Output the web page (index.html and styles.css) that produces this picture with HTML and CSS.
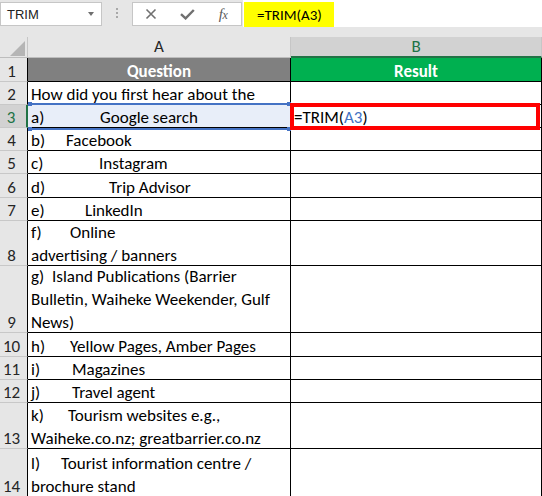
FILE: index.html
```html
<!DOCTYPE html>
<html lang="en">
<head>
<meta charset="utf-8">
<title>TRIM</title>
<link rel="stylesheet" href="styles.css">
</head>
<body>
<div class="toolbar">
  <div class="namebox"><span class="name">TRIM</span><span class="caret"></span></div>
  <div class="grip"><i></i><i></i><i></i></div>
  <div class="fbtns">
    <div class="btn">
      <svg width="12" height="12" viewBox="0 0 12 12"><path d="M1.5 1.5 L10.5 10.5 M10.5 1.5 L1.5 10.5" stroke="#707070" stroke-width="1.6" fill="none"/></svg>
    </div>
    <div class="btn">
      <svg width="15" height="11" viewBox="0 0 15 11"><path d="M1 5.2 L5.6 9.4 L13.8 1" stroke="#707070" stroke-width="2.4" fill="none"/></svg>
    </div>
    <div class="btn"><span class="fx">f<span class="fxx">x</span></span></div>
  </div>
  <div class="fbar"><span class="fhl">=TRIM(A3)</span></div>
</div>

<div class="sheet">
  <div class="corner"><svg width="28" height="20" viewBox="0 0 28 20"><polygon points="25,4 25,19 10,19" fill="#b5b5b5"/></svg></div>
  <div class="ch">A</div>
  <div class="ch on">B</div>

  <div class="rh">1</div>
  <div class="c hq">Question</div>
  <div class="c hr">Result</div>

  <div class="rh">2</div>
  <div class="c"><div class="t">How did you first hear about the</div></div>
  <div class="c b"></div>

  <div class="rh on">3</div>
  <div class="c ref"><div class="t"><span class="lab w69">a)</span>Google search</div></div>
  <div class="c b"><div class="t">=TRIM(<span class="arg">A3</span>)</div></div>

  <div class="rh">4</div>
  <div class="c"><div class="t"><span class="lab w35">b)</span>Facebook</div></div>
  <div class="c b"></div>

  <div class="rh">5</div>
  <div class="c"><div class="t"><span class="lab w68">c)</span>Instagram</div></div>
  <div class="c b"></div>

  <div class="rh">6</div>
  <div class="c"><div class="t"><span class="lab w78">d)</span>Trip Advisor</div></div>
  <div class="c b"></div>

  <div class="rh">7</div>
  <div class="c"><div class="t"><span class="lab w54">e)</span>LinkedIn</div></div>
  <div class="c b"></div>

  <div class="rh">8</div>
  <div class="c"><div class="t"><span class="lab w39">f)</span>Online<br>advertising / banners</div></div>
  <div class="c b"></div>

  <div class="rh">9</div>
  <div class="c"><div class="t"><span class="lab w21">g)</span>Island Publications (Barrier<br>Bulletin, Waiheke Weekender, Gulf<br>News)</div></div>
  <div class="c b"></div>

  <div class="rh">10</div>
  <div class="c"><div class="t"><span class="lab w39">h)</span>Yellow Pages, Amber Pages</div></div>
  <div class="c b"></div>

  <div class="rh">11</div>
  <div class="c"><div class="t"><span class="lab w41">i)</span>Magazines</div></div>
  <div class="c b"></div>

  <div class="rh">12</div>
  <div class="c"><div class="t"><span class="lab w41">j)</span>Travel agent</div></div>
  <div class="c b"></div>

  <div class="rh">13</div>
  <div class="c"><div class="t"><span class="lab w37">k)</span>Tourism websites e.g.,<br>Waiheke.co.nz; greatbarrier.co.nz</div></div>
  <div class="c b"></div>

  <div class="rh">14</div>
  <div class="c"><div class="t"><span class="lab w30">l)</span>Tourist information centre /<br>brochure stand</div></div>
  <div class="c b"></div>

  <div class="sel"><i class="k tl"></i><i class="k tr"></i><i class="k bl"></i><i class="k br"></i></div>
  <div class="redbox"></div>
</div>
</body>
</html>
```

FILE: styles.css
```css
* { box-sizing: border-box; margin: 0; padding: 0; }
html, body { width: 542px; height: 496px; overflow: hidden; }
body {
  background: #e6e6e6;
  font-family: Carlito, Lato, "Liberation Sans", sans-serif;
  color: #000;
}

/* ---------- toolbar ---------- */
.toolbar { display: flex; align-items: flex-start; height: 37px; }
.namebox {
  margin-top: 2px; width: 102px; height: 24px;
  background: #fff; border: 1px solid #c6c6c6;
  display: flex; align-items: center; justify-content: space-between;
  padding: 0 7px 0 6px;
}
.name { font-family: "Liberation Sans", sans-serif; font-size: 13px; color: #222; }
.caret {
  width: 0; height: 0;
  border-left: 3.5px solid transparent; border-right: 3.5px solid transparent;
  border-top: 4px solid #6f6f6f;
}
.grip { width: 30px; display: flex; flex-direction: column; align-items: center; gap: 2px; padding-top: 8px; }
.grip i { display: block; width: 2px; height: 2px; background: #a8a8a8; }
.fbtns {
  margin-top: 2px; width: 110px; height: 24px;
  background: #fff; border: 1px solid #c6c6c6;
  display: flex;
}
.btn { width: 36px; height: 22px; display: flex; align-items: center; justify-content: center; }
.fx { font-family: "Liberation Serif", serif; font-style: italic; font-size: 15px; color: #5a5a5a; letter-spacing: -0.5px; }
.fxx { font-size: 12px; }
.fbar { flex: 1; height: 27px; margin-left: 1px; background: #fff; }
.fhl {
  display: block; margin: 2px 0 0 1px; width: 90px; height: 25px;
  background: #ffff00; padding-left: 13px;
  font-size: 15px; line-height: 26px; color: #000;
}

/* ---------- sheet ---------- */
.sheet {
  position: relative;
  display: grid;
  grid-template-columns: 28px 263px 251px;
  grid-template-rows: 21px 24px 23px 23px 23px 23px 24px 23px 45px 67px 24px 23px 23px 46px 48px;
  font-size: 17px;
}
.corner { border-right: 1px solid #c6c6c6; border-bottom: 1px solid #bdbdbd; background: #e6e6e6; }
.corner svg { display: block; }
.ch {
  background: #e6e6e6; border-right: 1px solid #c6c6c6; border-bottom: 1px solid #bdbdbd;
  display: flex; align-items: flex-end; justify-content: center;
  line-height: 20px; color: #262626;
}
.ch.on { background: #d2d2d2; color: #217346; border-bottom: 2px solid #217346; line-height: 19px; }

.rh {
  background: #e6e6e6; border-right: 1px solid #000; border-bottom: 1px solid #c8c8c8;
  display: flex; align-items: flex-end; justify-content: center;
  padding-right: 4px; line-height: 19px; color: #262626;
}
.rh.on { background: #d2d2d2; color: #217346; border-right: 2px solid #217346; }

.c {
  background: #fff; border-right: 1px solid #000; border-bottom: 1px solid #000;
  display: flex; align-items: flex-end;
  padding-left: 3px; line-height: 23px; white-space: nowrap;
}
.t { white-space: nowrap; position: relative; top: 2px; }
.hq, .hr { justify-content: center; padding-left: 0; color: #fff; font-weight: bold; line-height: 19px; }
.hq { background: #808080; }
.hr { background: #00b050; }
.ref { background: #e8eef9; }
.arg { color: #4472c4; }

.lab { display: inline-block; }
.w21 { width: 21px; } .w30 { width: 30px; } .w35 { width: 35px; } .w37 { width: 37px; }
.w39 { width: 39px; } .w41 { width: 41px; } .w54 { width: 54px; } .w68 { width: 68px; }
.w69 { width: 69px; } .w78 { width: 78px; }

/* ---------- overlays ---------- */
.sel {
  position: absolute; left: 28px; top: 66px; width: 263px; height: 27px;
  border-top: 2px solid #4472c4; border-bottom: 2px solid #4472c4;
}
.k { position: absolute; width: 4px; height: 4px; background: #4472c4; }
.tl { left: 0; top: -3px; } .tr { right: 0; top: -3px; }
.bl { left: 0; bottom: -3px; } .br { right: 0; bottom: -3px; }
.redbox {
  position: absolute; left: 290px; top: 66px; width: 250px; height: 27px;
  border: 4px solid #ff0000;
}
```
